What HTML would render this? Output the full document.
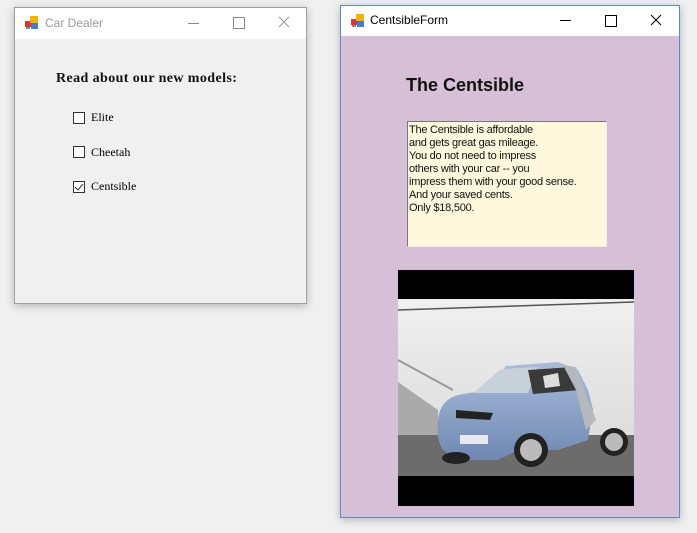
<!DOCTYPE html>
<html><head><style>
body{margin:0;width:697px;height:533px;background:#f0f0f0;position:relative;overflow:hidden;font-family:"Liberation Sans",sans-serif}
.w{position:absolute;box-shadow:0 2px 8px rgba(0,0,0,.25)}
.ab{position:absolute}
.cb{position:absolute;width:12px;height:12px;border:1px solid #333;background:#fff;box-sizing:border-box}
.serif{font-family:"Liberation Serif",serif}
</style></head><body>
<div class="w" style="left:14px;top:7px;width:293px;height:297px;background:#f0f0f0;border:1px solid #a0a0a0;box-sizing:border-box">
 <div class="ab" style="left:0;top:0;width:291px;height:31px;background:#fff"></div>
 <svg class="ab" style="left:10px;top:8px" width="14" height="14"><rect x="0" y="5" width="6" height="6" fill="#d33"/><rect x="5" y="0" width="8" height="7" fill="#f0b400"/><rect x="6" y="7" width="7" height="6" fill="#4a7ad0"/><rect x="1" y="11" width="4" height="2" fill="#888"/></svg>
 <div class="ab" style="left:30px;top:8px;font-size:12px;color:#999">Car Dealer</div>
 <div class="ab" style="left:173px;top:15px;width:11px;height:1px;background:#888"></div>
 <div class="ab" style="left:218px;top:9px;width:10px;height:10px;border:1px solid #888"></div>
 <svg class="ab" style="left:263px;top:8px" width="12" height="12"><path d="M1 1L11 11M11 1L1 11" stroke="#999" stroke-width="1"/></svg>
 <div class="ab serif" style="left:41px;top:63px;font-size:14px;font-weight:bold;color:#111;letter-spacing:0.4px">Read about our new models:</div>
 <div class="cb" style="left:58px;top:104px"></div><div class="ab serif" style="left:76px;top:102px;font-size:12px">Elite</div>
 <div class="cb" style="left:58px;top:138px"></div><div class="ab serif" style="left:76px;top:137px;font-size:12px">Cheetah</div>
 <div class="cb" style="left:58px;top:173px"></div><svg class="ab" style="left:58px;top:173px" width="12" height="12"><path d="M2 6L5 9L10 3" stroke="#333" fill="none"/></svg><div class="ab serif" style="left:76px;top:171px;font-size:12px">Centsible</div>
</div>
<div class="w" style="left:340px;top:5px;width:340px;height:513px;background:#d8bfd8;border:1px solid #5b8ac9;box-sizing:border-box">
 <div class="ab" style="left:0;top:0;width:338px;height:30px;background:#fff"></div>
 <svg class="ab" style="left:10px;top:8px" width="14" height="14"><rect x="0" y="5" width="6" height="6" fill="#d33"/><rect x="5" y="0" width="8" height="7" fill="#f0b400"/><rect x="6" y="7" width="7" height="6" fill="#4a7ad0"/><rect x="1" y="11" width="4" height="2" fill="#888"/></svg>
 <div class="ab" style="left:29px;top:7px;font-size:12px;color:#000">CentsibleForm</div>
 <div class="ab" style="left:219px;top:14px;width:11px;height:1px;background:#000"></div>
 <div class="ab" style="left:264px;top:9px;width:10px;height:10px;border:1px solid #000"></div>
 <svg class="ab" style="left:309px;top:8px" width="12" height="12"><path d="M1 1L11 11M11 1L1 11" stroke="#000" stroke-width="1"/></svg>
 <div class="ab" style="left:65px;top:69px;font-size:18px;font-weight:bold;color:#111">The Centsible</div>
 <div class="ab" style="left:66px;top:115px;width:200px;height:126px;background:#fff8dc;border:1px solid #777;border-right-color:#eee;border-bottom-color:#eee;box-sizing:border-box;font-size:11px;line-height:13px;padding:2px 1px;color:#111;letter-spacing:-0.25px">The Centsible is affordable<br>and gets great gas mileage.<br>You do not need to impress<br>others with your car -- you<br>impress them with your good sense.<br>And your saved cents.<br>Only $18,500.</div>
 <svg class="ab" style="left:57px;top:264px" width="236" height="236">
  <rect width="236" height="236" fill="#000"/>
  <defs><linearGradient id="g" x1="0" y1="0" x2="0" y2="1"><stop offset="0" stop-color="#f0f0f0"/><stop offset="1" stop-color="#d8d8d8"/></linearGradient>
  <linearGradient id="c" x1="0" y1="0" x2="0" y2="1"><stop offset="0" stop-color="#a9bedb"/><stop offset="1" stop-color="#7088b2"/></linearGradient></defs>
  <rect y="29" width="236" height="177" fill="url(#g)"/>
  <path d="M0 40L236 32" stroke="#555" stroke-width="1.5"/>
  <rect y="165" width="236" height="41" fill="#6c6c6c"/>
  <path d="M0 112L0 165L40 165L40 140Z" fill="#aaa"/>
  <path d="M0 90L55 120" stroke="#999" stroke-width="2"/>
  <path d="M40 150Q42 130 60 125L88 120L108 96L160 92L180 100L190 120L195 140L190 170L160 180L120 180L100 190L60 190L45 180Q38 170 40 150Z" fill="url(#c)"/>
  <path d="M75 123L103 99L140 97L130 123Z" fill="#c8d0da"/>
  <path d="M130 100L175 97L182 120L135 124Z" fill="#3a3a3a"/>
  <path d="M145 106L160 103L162 116L147 118Z" fill="#ddd"/>
  <path d="M165 95L178 97L198 150L188 160L178 120Z" fill="#b5b8bc"/>
  <path d="M58 140L95 143L92 150L58 148Z" fill="#222"/>
  <rect x="62" y="165" width="28" height="9" fill="#e8e8f0"/>
  <circle cx="133" cy="180" r="17" fill="#222"/><circle cx="133" cy="180" r="11" fill="#bbb"/>
  <circle cx="216" cy="172" r="14" fill="#222"/><circle cx="216" cy="172" r="9" fill="#bbb"/>
  <ellipse cx="58" cy="188" rx="14" ry="6" fill="#222"/>
 </svg>
</div>
</body></html>
